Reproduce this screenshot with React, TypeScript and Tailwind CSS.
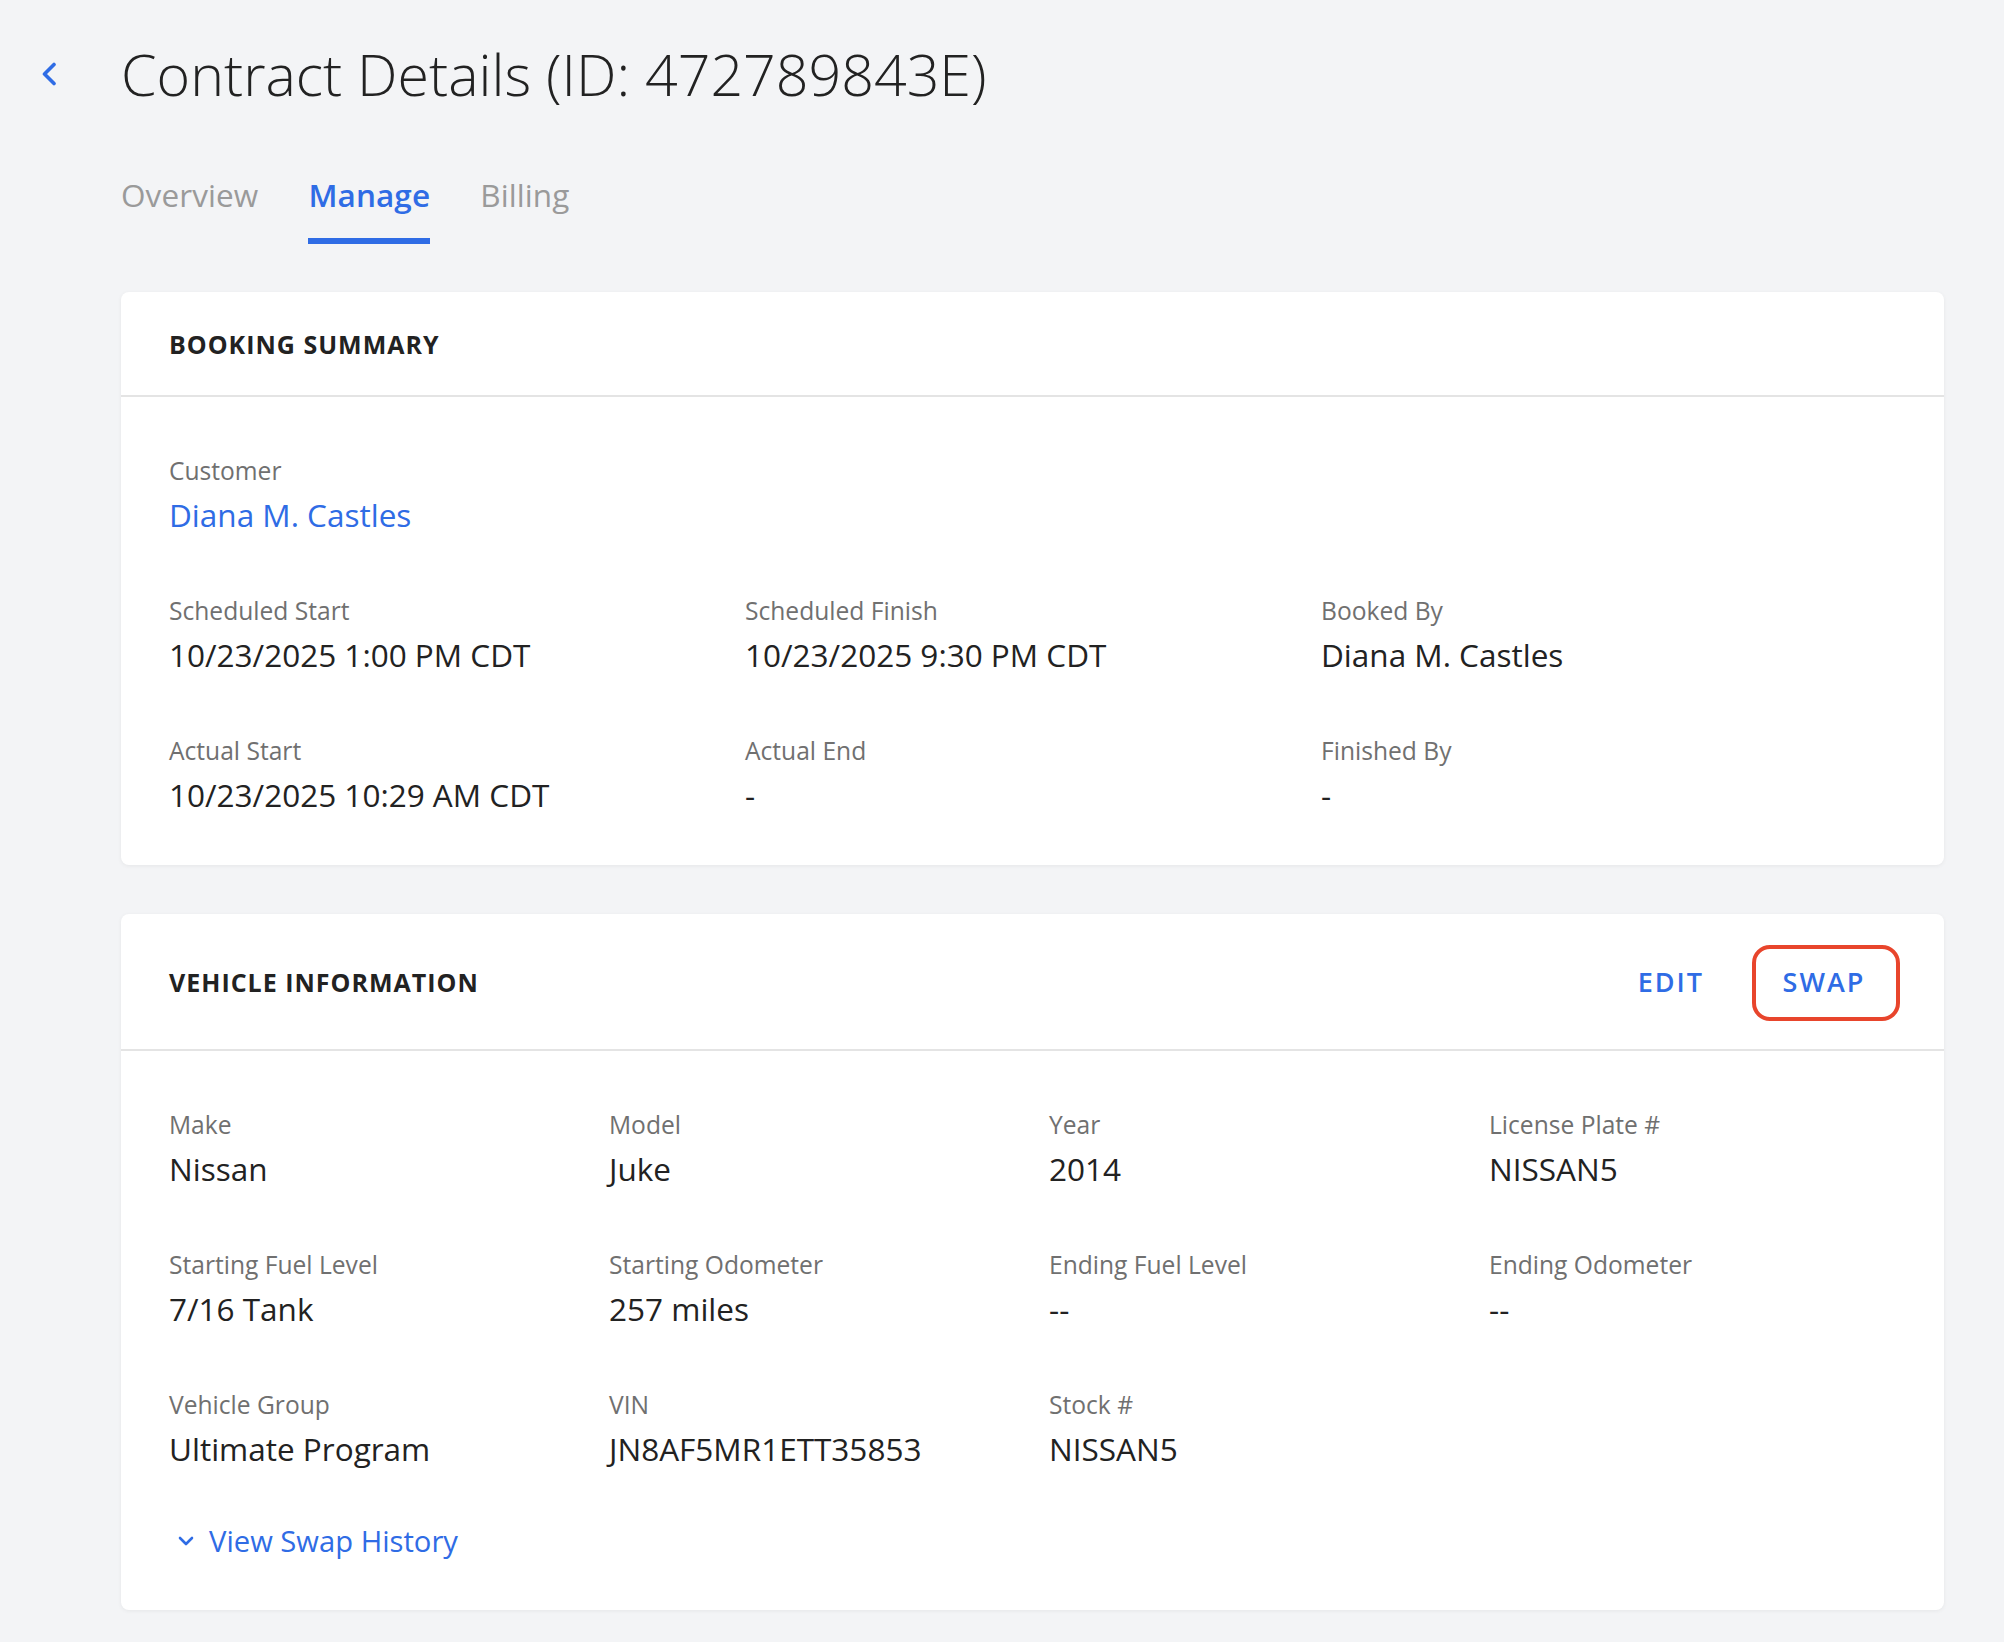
import React from 'react'

const FONT = { fontFamily: '"Open Sans", "Noto Sans", sans-serif' }

// 예약 요약 데이터
const BOOKING_ROWS = [
  [
    { label: 'Scheduled Start', value: '10/23/2025 1:00 PM CDT' },
    { label: 'Scheduled Finish', value: '10/23/2025 9:30 PM CDT' },
    { label: 'Booked By', value: 'Diana M. Castles' },
  ],
  [
    { label: 'Actual Start', value: '10/23/2025 10:29 AM CDT' },
    { label: 'Actual End', value: '-' },
    { label: 'Finished By', value: '-' },
  ],
]

// 차량 정보 데이터
const VEHICLE_ROWS = [
  [
    { label: 'Make', value: 'Nissan' },
    { label: 'Model', value: 'Juke' },
    { label: 'Year', value: '2014' },
    { label: 'License Plate #', value: 'NISSAN5' },
  ],
  [
    { label: 'Starting Fuel Level', value: '7/16 Tank' },
    { label: 'Starting Odometer', value: '257 miles' },
    { label: 'Ending Fuel Level', value: '--' },
    { label: 'Ending Odometer', value: '--' },
  ],
  [
    { label: 'Vehicle Group', value: 'Ultimate Program' },
    { label: 'VIN', value: 'JN8AF5MR1ETT35853' },
    { label: 'Stock #', value: 'NISSAN5' },
  ],
]

function Field({ label, value, link = false }: { label: string; value: string; link?: boolean }) {
  return (
    <div className="flex flex-col">
      <span className="text-[24.6px] leading-[32px] text-[#707070]">{label}</span>
      <span className={`mt-[7px] text-[31.5px] leading-[42px] ${link ? 'text-[#2f6ce5]' : 'text-[#222222]'}`}>
        {value}
      </span>
    </div>
  )
}

export default function App() {
  return (
    <div className="min-h-screen bg-[#f3f4f6] pb-[33px]" style={FONT}>
      {/* 헤더 */}
      <header className="flex items-center pt-[34px]">
        <button className="flex w-[121px] items-center pl-[41px] text-[#2f6ce5]">
          <svg width="16" height="24" viewBox="0 0 16 24" fill="none">
            <polyline points="13,2.5 3.5,12 13,21.5" stroke="currentColor" strokeWidth="3.6" strokeLinecap="round" strokeLinejoin="round" />
          </svg>
        </button>
        <h1 className="text-[57.3px] font-light leading-[80px] text-[#222222]">Contract Details (ID: 472789843E)</h1>
      </header>

      <main className="ml-[121px] mr-[60px]">
        {/* 탭 */}
        <nav className="mt-[60px] flex gap-[50px]">
          <span className="pb-[28px] text-[31.5px] leading-[42px] tracking-[0.1px] text-[#9a9a9a]">Overview</span>
          <span className="border-b-[6px] border-[#2f6ce5] pb-[22px] text-[31.5px] font-semibold leading-[42px] tracking-[0.1px] text-[#2f6ce5]">
            Manage
          </span>
          <span className="pb-[28px] text-[31.5px] leading-[42px] tracking-[0.1px] text-[#9a9a9a]">Billing</span>
        </nav>

        {/* 예약 요약 */}
        <section className="mt-[48px] rounded-[8px] bg-white shadow-[0_1px_4px_rgba(0,0,0,0.06)]">
          <div className="flex h-[105px] items-center border-b-2 border-[#e4e4e4] px-[48px]">
            <h2 className="pt-[2px] text-[25px] font-bold tracking-[1px] text-[#222222]">BOOKING SUMMARY</h2>
          </div>
          <div className="flex flex-col gap-[59px] px-[48px] pb-[49px] pt-[58px]">
            <Field label="Customer" value="Diana M. Castles" link />
            {BOOKING_ROWS.map((row, i) => (
              <div key={i} className="grid grid-cols-[576px_576px_1fr]">
                {row.map((f) => (
                  <Field key={f.label} label={f.label} value={f.value} />
                ))}
              </div>
            ))}
          </div>
        </section>

        {/* 차량 정보 */}
        <section className="mt-[49px] rounded-[8px] bg-white shadow-[0_1px_4px_rgba(0,0,0,0.06)]">
          <div className="flex h-[137px] items-center justify-between border-b-2 border-[#e4e4e4] pl-[48px] pr-[44px]">
            <h2 className="pt-[3px] text-[25px] font-bold tracking-[1px] text-[#222222]">VEHICLE INFORMATION</h2>
            <div className="flex items-center gap-[48px] pt-[2px]">
              <button className="text-[27px] font-semibold tracking-[2px] text-[#2f6ce5]">EDIT</button>
              <button className="flex h-[76px] w-[148px] items-center justify-center rounded-[18px] border-4 border-[#e8452c] pr-[4px] text-[27px] font-semibold tracking-[2px] text-[#2f6ce5]">
                SWAP
              </button>
            </div>
          </div>
          <div className="flex flex-col px-[48px] pb-[50px] pt-[58px]">
            <div className="flex flex-col gap-[59px]">
              {VEHICLE_ROWS.map((row, i) => (
                <div key={i} className="grid grid-cols-[440px_440px_440px_1fr]">
                  {row.map((f) => (
                    <Field key={f.label} label={f.label} value={f.value} />
                  ))}
                </div>
              ))}
            </div>
            <button className="mt-[52px] flex items-center gap-[15px] pl-[9px] text-[#2f6ce5]">
              <svg width="16" height="10" viewBox="0 0 16 10" fill="none">
                <polyline points="2,2 8,8 14,2" stroke="currentColor" strokeWidth="2.6" strokeLinecap="round" strokeLinejoin="round" />
              </svg>
              <span className="text-[29.2px] leading-[38px]">View Swap History</span>
            </button>
          </div>
        </section>
      </main>
    </div>
  )
}
